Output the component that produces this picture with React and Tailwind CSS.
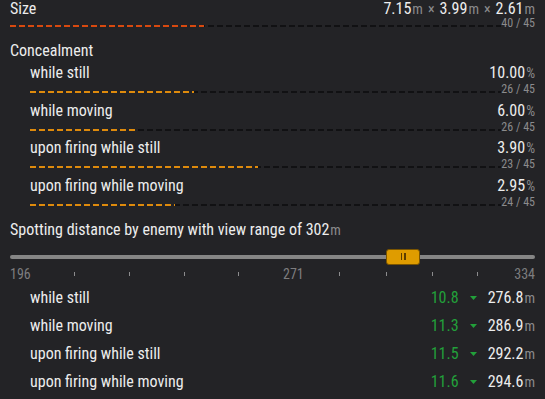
const CONCEAL = [
  { label: 'while still', value: '10.00', fill: 164, rank: '26 / 45' },
  { label: 'while moving', value: '6.00', fill: 105, rank: '26 / 45' },
  { label: 'upon firing while still', value: '3.90', fill: 228, rank: '23 / 45' },
  { label: 'upon firing while moving', value: '2.95', fill: 145, rank: '24 / 45' },
];

const SPOTTING = [
  { label: 'while still', delta: '10.8', dist: '276.8' },
  { label: 'while moving', delta: '11.3', dist: '286.9' },
  { label: 'upon firing while still', delta: '11.5', dist: '292.2' },
  { label: 'upon firing while moving', delta: '11.6', dist: '294.6' },
];

const TICKS = [64, 119, 174, 228, 329, 376, 422, 467];

function DashBar({ fill, color, rank }) {
  return (
    <div className="flex items-center h-[12px]">
      <svg className="flex-1 h-[2px]" preserveAspectRatio="none">
        <line x1="0" y1="1" x2="100%" y2="1" stroke="#111113" strokeWidth="2" strokeDasharray="6 3" />
        <line x1="0" y1="1" x2={fill} y2="1" stroke={color} strokeWidth="2" strokeDasharray="6 3" />
      </svg>
      <span className="w-[34px] mb-[6px] text-right text-[12px] leading-[12px] text-[#8b8b8d]">{rank}</span>
    </div>
  );
}

function Unit({ children }) {
  return <span className="text-[14px] text-[#8b8b8d] ml-[1px]">{children}</span>;
}

export default function App() {
  return (
    <div className="w-[545px] h-[399px] overflow-hidden bg-[#232326] text-[#ededed] font-['Roboto_Condensed','Roboto',sans-serif] font-stretch-[85%] px-[10px] text-[16px]">
      {/* Size */}
      <div className="flex justify-between items-baseline h-[17px] leading-[17px]">
        <span>Size</span>
        <span>
          7.15<Unit>m</Unit>
          <span className="text-[14px] text-[#8b8b8d] mx-[5px]">×</span>
          3.99<Unit>m</Unit>
          <span className="text-[14px] text-[#8b8b8d] mx-[5px]">×</span>
          2.61<Unit>m</Unit>
        </span>
      </div>
      <div className="mt-[3px]">
        <DashBar fill={194} color="#d8490f" rank="40 / 45" />
      </div>

      {/* Concealment */}
      <div className="mt-[10px] h-[17px] leading-[17px]">Concealment</div>
      <div className="pl-[20px] mt-[5px] flex flex-col gap-[3.5px]">
        {CONCEAL.map((r) => (
          <div key={r.label}>
            <div className="flex justify-between h-[17px] leading-[17px]">
              <span>{r.label}</span>
              <span>
                {r.value}
                <Unit>%</Unit>
              </span>
            </div>
            <div className="mt-[5px]">
              <DashBar fill={r.fill} color="#de8a0c" rank={r.rank} />
            </div>
          </div>
        ))}
      </div>

      {/* Spotting */}
      <div className="mt-[10px] h-[17px] leading-[17px]">
        Spotting distance by enemy with view range of 302<Unit>m</Unit>
      </div>
      <div className="relative mt-[17px] h-[29.5px]">
        <div className="h-[4px] rounded-full bg-[#858585]" />
        <div className="absolute left-[376px] top-[-6px] w-[34px] h-[16px] rounded-[3px] bg-[#df9c00] border border-[#7a5400] flex items-center justify-center gap-[2px]">
          <span className="w-[1.5px] h-[7px] bg-[#5a3c00]" />
          <span className="w-[1.5px] h-[7px] bg-[#5a3c00]" />
        </div>
        {TICKS.map((x) => (
          <span key={x} className="absolute top-[17.5px] w-[1px] h-[4px] bg-[#8b8b8d]" style={{ left: x }} />
        ))}
        <div className="absolute inset-x-0 top-[12.5px] flex justify-between text-[14px] leading-[14px] text-[#7d7d7f]">
          <span>196</span>
          <span className="absolute left-[273px]">271</span>
          <span>334</span>
        </div>
      </div>

      <div className="pl-[20px] flex flex-col">
        {SPOTTING.map((r) => (
          <div key={r.label} className="flex justify-between items-center h-[28px]">
            <span>{r.label}</span>
            <span className="flex items-center">
              <span className="text-[#22a03a]">{r.delta}</span>
              <svg width="7" height="4" viewBox="0 0 7 4" className="mx-[11px]">
                <path d="M0 0H7L3.5 4Z" fill="#22a03a" />
              </svg>
              <span>
                {r.dist}
                <Unit>m</Unit>
              </span>
            </span>
          </div>
        ))}
      </div>
    </div>
  );
}
